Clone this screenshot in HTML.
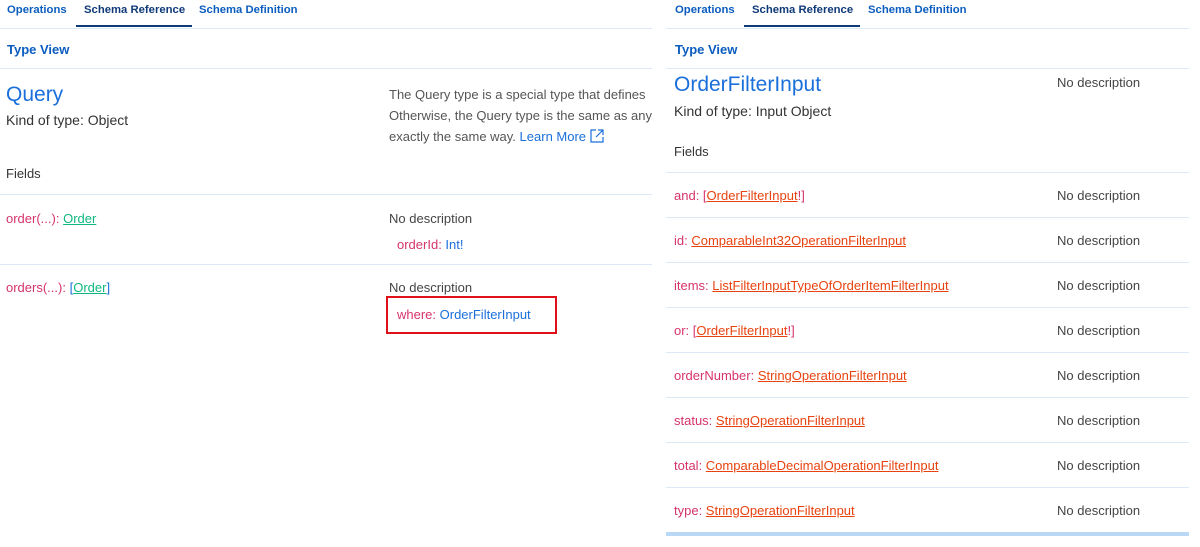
<!DOCTYPE html>
<html><head><meta charset="utf-8"><style>
*{margin:0;padding:0;box-sizing:border-box}
body{width:1200px;height:547px;background:#fff;font-family:"Liberation Sans",sans-serif;font-size:13px;color:#444;position:relative;overflow:hidden}
.p{position:absolute;top:0;height:547px;overflow:hidden}
.a{position:absolute;white-space:nowrap}
.tab{font-weight:bold;color:#0b5cbf;font-size:11.3px;top:4px}
.hl{position:absolute;height:1px;background:#dde9f7}
.m{color:#d6336c}
.b{color:#1a6fdb}
.g{color:#10b880;text-decoration:underline}
.o{color:#e8430f;text-decoration:underline}
</style></head><body>
<div class="p" style="left:0;width:652px">
 <div class="a tab" style="left:7px">Operations</div>
 <div class="a tab" style="left:84px;color:#0f3a78">Schema Reference</div>
 <div class="a tab" style="left:199px">Schema Definition</div>
 <div class="a" style="left:76px;top:25px;width:116px;height:2px;background:#0f3a78"></div>
 <div class="hl" style="left:0;width:652px;top:28px"></div>
 <div class="a" style="left:7px;top:42px;font-weight:bold;color:#0b5cbf;font-size:13px">Type View</div>
 <div class="hl" style="left:0;width:652px;top:68px"></div>
 <div class="a b" style="left:6px;top:83px;font-size:21px">Query</div>
 <div class="a" style="left:6px;top:112px;font-size:14px;color:#333">Kind of type: Object</div>
 <div class="a" style="left:389px;top:84px;line-height:21px;color:#555">The Query type is a special type that defines<br>Otherwise, the Query type is the same as any<br>exactly the same way. <span class="b">Learn More</span> <svg width="14" height="14" viewBox="0 0 14 14" style="vertical-align:-2px"><path d="M6 1H1v12h12V8M8 1h5v5M13 1L6 8" fill="none" stroke="#1a6fdb" stroke-width="1.2"/></svg></div>
 <div class="a" style="left:6px;top:166px;color:#333">Fields</div>
 <div class="hl" style="left:0;width:652px;top:194px"></div>
 <div class="a" style="left:6px;top:211px"><span class="m">order(...): </span><span class="g">Order</span></div>
 <div class="a" style="left:389px;top:211px">No description</div>
 <div class="a" style="left:397px;top:237px"><span class="m">orderId: </span><span class="b">Int!</span></div>
 <div class="hl" style="left:0;width:652px;top:264px"></div>
 <div class="a" style="left:6px;top:280px"><span class="m">orders(...): </span><span class="b">[</span><span class="g">Order</span><span class="b">]</span></div>
 <div class="a" style="left:389px;top:280px">No description</div>
 <div class="a" style="left:386px;top:296px;width:171px;height:38px;border:2px solid #e0101a"></div>
 <div class="a" style="left:397px;top:307px"><span class="m">where: </span><span class="b">OrderFilterInput</span></div>
</div>
<div class="p" style="left:666px;width:523px">
 <div class="a tab" style="left:9px">Operations</div>
 <div class="a tab" style="left:86px;color:#0f3a78">Schema Reference</div>
 <div class="a tab" style="left:202px">Schema Definition</div>
 <div class="a" style="left:78px;top:25px;width:116px;height:2px;background:#0f3a78"></div>
 <div class="hl" style="left:0;width:523px;top:28px"></div>
 <div class="a" style="left:9px;top:42px;font-weight:bold;color:#0b5cbf;font-size:13px">Type View</div>
 <div class="hl" style="left:0;width:523px;top:68px"></div>
 <div class="a b" style="left:8px;top:73px;font-size:21px">OrderFilterInput</div>
 <div class="a" style="left:8px;top:103px;font-size:14px;color:#333">Kind of type: Input Object</div>
 <div class="a" style="left:391px;top:75px">No description</div>
 <div class="a" style="left:8px;top:144px;color:#333">Fields</div>
 <div class="hl" style="left:0;width:523px;top:172px"></div>
 <div class="a" style="left:8px;top:188px"><span class="m">and: </span><span class="m">[</span><span class="o">OrderFilterInput</span><span class="m">!]</span></div>
 <div class="a" style="left:391px;top:188px">No description</div>
 <div class="hl" style="left:0;width:523px;top:217px"></div>
 <div class="a" style="left:8px;top:233px"><span class="m">id: </span><span class="o">ComparableInt32OperationFilterInput</span></div>
 <div class="a" style="left:391px;top:233px">No description</div>
 <div class="hl" style="left:0;width:523px;top:262px"></div>
 <div class="a" style="left:8px;top:278px"><span class="m">items: </span><span class="o">ListFilterInputTypeOfOrderItemFilterInput</span></div>
 <div class="a" style="left:391px;top:278px">No description</div>
 <div class="hl" style="left:0;width:523px;top:307px"></div>
 <div class="a" style="left:8px;top:323px"><span class="m">or: [</span><span class="o">OrderFilterInput</span><span class="m">!]</span></div>
 <div class="a" style="left:391px;top:323px">No description</div>
 <div class="hl" style="left:0;width:523px;top:352px"></div>
 <div class="a" style="left:8px;top:368px"><span class="m">orderNumber: </span><span class="o">StringOperationFilterInput</span></div>
 <div class="a" style="left:391px;top:368px">No description</div>
 <div class="hl" style="left:0;width:523px;top:397px"></div>
 <div class="a" style="left:8px;top:413px"><span class="m">status: </span><span class="o">StringOperationFilterInput</span></div>
 <div class="a" style="left:391px;top:413px">No description</div>
 <div class="hl" style="left:0;width:523px;top:442px"></div>
 <div class="a" style="left:8px;top:458px"><span class="m">total: </span><span class="o">ComparableDecimalOperationFilterInput</span></div>
 <div class="a" style="left:391px;top:458px">No description</div>
 <div class="hl" style="left:0;width:523px;top:487px"></div>
 <div class="a" style="left:8px;top:503px"><span class="m">type: </span><span class="o">StringOperationFilterInput</span></div>
 <div class="a" style="left:391px;top:503px">No description</div>
 <div class="a" style="left:0;top:532px;width:523px;height:4px;background:#b9d8f5"></div>
</div>
</body></html>
